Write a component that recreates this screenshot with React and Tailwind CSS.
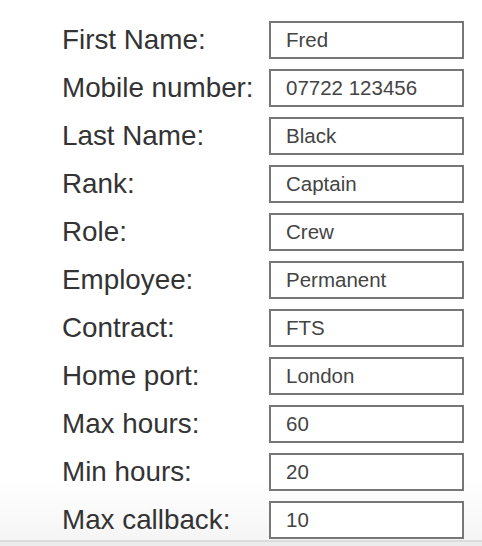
const fields = [
  ['First Name:', 'Fred'],
  ['Mobile number:', '07722 123456'],
  ['Last Name:', 'Black'],
  ['Rank:', 'Captain'],
  ['Role:', 'Crew'],
  ['Employee:', 'Permanent'],
  ['Contract:', 'FTS'],
  ['Home port:', 'London'],
  ['Max hours:', '60'],
  ['Min hours:', '20'],
  ['Max callback:', '10'],
];

export default function App() {
  return (
    <div className="w-[482px] h-[546px] flex flex-col overflow-hidden bg-white font-['Liberation_Sans',Arial,sans-serif]">
      {/* form area */}
      <div className="h-[540px] shrink-0 bg-[linear-gradient(to_bottom,#ffffff_480px,#f5f5f5_540px)]">
        <div className="grid grid-cols-[207px_195px] gap-y-[10px] pl-[62px] pt-[21px]">
          {fields.map(([label, value]) => (
            <div key={label} className="contents">
              <label className="h-[38px] flex items-center text-[27.8px] text-[#333] leading-none">
                {label}
              </label>
              <div className="h-[38px] border-2 border-[#777] bg-white flex items-center pl-[15px] text-[20.5px] text-[#444] leading-none">
                {value}
              </div>
            </div>
          ))}
        </div>
      </div>
      {/* bottom bar */}
      <div className="flex-1 border-t-2 border-[#dcdcdc] bg-[#ececec]"></div>
    </div>
  );
}
